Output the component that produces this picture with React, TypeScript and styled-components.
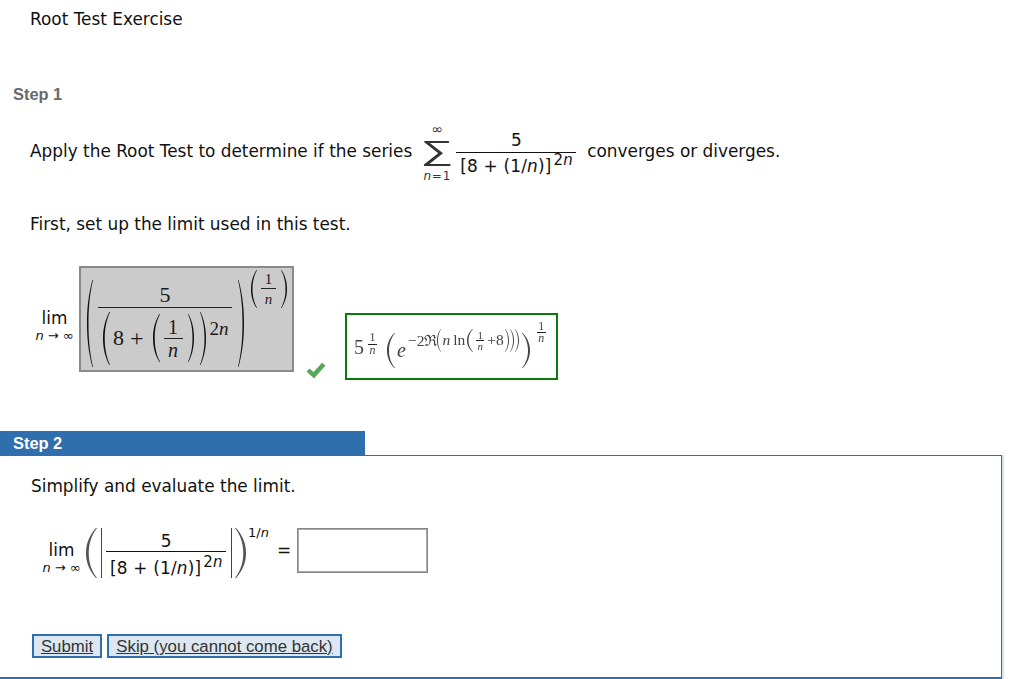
import React from "react";
import styled, { createGlobalStyle } from "styled-components";

const Global = createGlobalStyle`
  html, body { margin: 0; padding: 0; background: #fff; }
  body { font-family: "DejaVu Sans", Verdana, sans-serif; font-size: 16.9px; color: #111; overflow: hidden; }
`;

const Page = styled.div`
  width: 1024px;
  height: 679px;
  overflow: hidden;
`;

const Title = styled.div`
  height: 37px;
  padding: 0 0 0 30px;
  line-height: 38px;
`;

const StepOneLabel = styled.div`
  margin-top: 39px;
  height: 36px;
  padding-left: 13px;
  font: bold 16.4px/36px "Liberation Sans", Arial, sans-serif;
  color: #6a6a6a;
`;

const ApplyRow = styled.div`
  display: flex;
  align-items: center;
  height: 60px;
  margin-top: 9px;
  padding-left: 30px;
`;

const SumBlock = styled.div`
  display: flex;
  flex-direction: column;
  align-items: center;
  align-self: flex-start;
  width: 30px;
  margin-left: 10px;
  padding-top: 2px;
`;

const SumLimit = styled.div`
  font-size: 14px;
  line-height: 12px;
  height: 12px;
  white-space: nowrap;
  color: #333;
`;

const SumLimitLower = styled.div`
  margin-top: 4px;
  font-size: 12px;
  line-height: 12px;
  height: 12px;
  letter-spacing: 0.8px;
  white-space: nowrap;
  color: #333;
  i { font-style: italic; }
`;

const SumGlyph = styled.div`
  font: 400 28px/30px "Liberation Sans", Arial, sans-serif;
  height: 30px;
  margin-top: 1px;
  color: #333;
  transform: scaleX(1.65);
`;

const TextFrac = styled.div`
  display: inline-flex;
  flex-direction: column;
  align-items: center;
  flex: none;
  width: 120px;
  margin: ${(p: { $m?: string }) => p.$m || "0"};
`;

const TextNum = styled.div`
  line-height: 24px;
  height: 24px;
  border-bottom: 1px solid #111;
  align-self: stretch;
  text-align: center;
`;

const TextDen = styled.div`
  align-self: stretch;
  line-height: 26px;
  height: 26px;
  padding-left: 4px;
  letter-spacing: 0.2px;
  white-space: nowrap;
  sup { font-size: 15px; line-height: 0; position: relative; top: 0; margin-left: 2px; vertical-align: super; i { font-style: italic; } }
`;

const AfterText = styled.span`
  margin-left: 11px;
`;

const Para = styled.div`
  height: 24px;
  line-height: 24px;
  padding-left: ${(p: { $x?: number }) => p.$x ?? 30}px;
`;

const ParaFirst = styled(Para)`
  margin-top: 31px;
`;

const LimitRow = styled.div`
  display: flex;
  align-items: flex-start;
  height: 165px;
  margin-top: 30px;
`;

const LimLabel = styled.div`
  display: flex;
  flex-direction: column;
  align-items: center;
  flex: none;
  width: 45px;
  margin-left: ${(p: { $x: number }) => p.$x}px;
  margin-top: ${(p: { $y?: number }) => p.$y ?? 0}px;
  span { font-size: 16.9px; line-height: 17px; }
  small { font-size: 13px; line-height: 17px; white-space: nowrap; i { font-style: italic; } }
`;

const GrayBox = styled.div`
  box-sizing: border-box;
  flex: none;
  width: 215px;
  height: 106px;
  margin-left: 2px;
  background: #cbcbcb;
  border: 2px solid #8a8a8a;
  display: flex;
  align-items: flex-start;
  padding: 2px 0 0 6px;
  font-family: "Liberation Serif", "Times New Roman", serif;
  font-size: 21px;
  color: #1a1a1a;
`;

const ParenSvg = styled.svg`
  display: block;
  flex: none;
  margin: ${(p: { $m?: string }) => p.$m || "0"};
`;

const Paren = ({ w, h, right, m, color = "#111" }: { w: number; h: number; right?: boolean; m?: string; color?: string }) => (
  <ParenSvg $m={m} width={w} height={h} viewBox="0 0 10 100" preserveAspectRatio="none">
    <path
      d={right ? "M0 0 C6 18 7.5 34 7.5 50 C7.5 66 6 82 0 100 L1 100 C8 82 10 66 10 50 C10 34 8 18 1 0 Z" : "M10 0 C4 18 2.5 34 2.5 50 C2.5 66 4 82 10 100 L9 100 C2 82 0 66 0 50 C0 34 2 18 9 0 Z"}
      fill={color}
    />
  </ParenSvg>
);

const MathFrac = styled.div`
  display: flex;
  flex-direction: column;
  align-items: center;
  flex: none;
  width: ${(p: { $w: number; $mt?: number; $ml?: number }) => p.$w}px;
  margin-top: ${(p) => p.$mt ?? 0}px;
  margin-left: ${(p) => p.$ml ?? 0}px;
`;

const MathNum = styled.div`
  align-self: stretch;
  text-align: center;
  height: ${(p: { $h: number; $size: number }) => p.$h}px;
  line-height: ${(p) => p.$h}px;
  font-size: ${(p) => p.$size}px;
  border-bottom: 1px solid #222;
`;

const MathDen = styled.div`
  height: ${(p: { $h: number; $size: number }) => p.$h}px;
  line-height: ${(p) => p.$h}px;
  font-size: ${(p) => p.$size}px;
  font-style: italic;
`;

const DenRow = styled.div`
  display: flex;
  align-items: center;
  align-self: flex-start;
  margin: 3px 0 0 5px;
  height: 54px;
`;

const DenText = styled.span`
  margin: ${(p: { $m: string; $size?: number }) => p.$m};
  font-size: ${(p) => p.$size ?? 22}px;
`;

const SupText = styled.span`
  align-self: flex-start;
  margin: 9px 0 0 4px;
  font-size: 19px;
  line-height: 18px;
  white-space: nowrap;
  i { font-style: italic; }
`;

const CheckSvg = styled.svg`
  flex: none;
  margin: 96px 0 0 12px;
`;

const AnswerBox = styled.div`
  box-sizing: border-box;
  flex: none;
  width: 213px;
  height: 67px;
  margin: 47px 0 0 19px;
  border: 2px solid #0b7a0b;
  background: #fff;
  display: flex;
  align-items: flex-start;
  padding: 10px 0 0 7px;
  font-family: "Liberation Serif", "Times New Roman", serif;
  color: #444;
`;

const AnsInner = styled.div`
  display: flex;
  align-items: flex-start;
  filter: blur(0.45px);
`;

const AnsBig = styled.span`
  font-size: 20px;
  line-height: 30px;
  margin-top: 7px;
`;

const AnsE = styled.span`
  font-size: 20px;
  font-style: italic;
  line-height: 26px;
  margin: 12px 0 0 2px;
`;

const AnsExp = styled.div`
  display: flex;
  align-items: center;
  height: 24px;
  font-size: 15.5px;
  margin: 3px 0 0 2px;
  white-space: nowrap;
  i { font-style: italic; margin-right: 3px; }
  span { white-space: pre; }
`;

const PlusEight = styled.span`
  margin-left: 3px;
`;

const StepTwoTab = styled.div`
  box-sizing: border-box;
  width: 365px;
  height: 25px;
  background: #2f6fad;
  color: #fff;
  font: bold 16.4px/24px "Liberation Sans", Arial, sans-serif;
  padding-left: 13px;
`;

const Panel = styled.div`
  box-sizing: border-box;
  width: 1002px;
  height: 224px;
  margin-top: -1px;
  border: 1px solid #2f6fad;
  border-left: none;
  border-bottom-width: 2px;
  padding-top: 18px;
  box-shadow: 2px 0 0 #d5e2f0;
`;

const EvalRow = styled.div`
  display: flex;
  align-items: flex-start;
  height: 52px;
  margin-top: 30px;
`;

const AbsBar = styled.div`
  flex: none;
  width: 1px;
  height: 50px;
  margin: ${(p: { $m: string }) => p.$m};
  background: #444;
`;

const EvalNum = styled(TextNum)`
  line-height: 28px;
`;

const EvalDen = styled(TextDen)`
  padding-top: 3px;
`;

const ExpSup = styled.span`
  font-size: 13px;
  line-height: 16px;
  margin: -3px 0 0 2px;
  width: 29px;
  white-space: nowrap;
  i { font-style: italic; }
`;

const Eq = styled.span`
  margin: 10px 0 0 0;
  line-height: 24px;
`;

const AnswerInput = styled.input`
  box-sizing: border-box;
  flex: none;
  width: 131px;
  height: 45px;
  margin: 0 0 0 6px;
  border: 1px solid #888;
  box-shadow: inset 0 0 0 1px #aaa;
  background: #fff;
  padding: 0;
`;

const Actions = styled.div`
  display: flex;
  gap: 5px;
  padding-left: 32px;
  margin-top: 54px;
`;

const Btn = styled.button`
  box-sizing: border-box;
  flex: none;
  height: 24px;
  width: ${(p: { $w: number }) => p.$w}px;
  padding: 1px 0 0;
  background: #dce7f2;
  border: 2px solid #2f6fad;
  border-radius: 0;
  font: 16.8px/20px "Liberation Sans", Arial, sans-serif;
  color: #333;
  text-decoration: underline;
  white-space: nowrap;
`;

const App = () => (
  <Page>
    <Global />
    <Title>Root Test Exercise</Title>
    <StepOneLabel>Step 1</StepOneLabel>
    <ApplyRow>
      <span>Apply the Root Test to determine if the series</span>
      <SumBlock>
        <SumLimit>∞</SumLimit>
        <SumGlyph>∑</SumGlyph>
        <SumLimitLower><i>n</i>=1</SumLimitLower>
      </SumBlock>
      <TextFrac $m="4px 0 0 4px">
        <TextNum>5</TextNum>
        <TextDen>[8 + (1/<i>n</i>)]<sup>2<i>n</i></sup></TextDen>
      </TextFrac>
      <AfterText>converges or diverges.</AfterText>
    </ApplyRow>
    <ParaFirst>First, set up the limit used in this test.</ParaFirst>
    <LimitRow>
      <LimLabel $x={32} $y={44}>
        <span>lim</span>
        <small><i>n</i> → ∞</small>
      </LimLabel>
      <GrayBox>
        <Paren w={6} h={87} m="10px 0 0 0" />
        <MathFrac $w={134} $mt={12} $ml={5}>
          <MathNum $h={25} $size={22}>5</MathNum>
          <DenRow>
            <Paren w={7} h={53} />
            <DenText $m="0 0 0 3px">8</DenText>
            <DenText $m="0 0 0 6px" $size={24}>+</DenText>
            <Paren w={7} h={48} m="0 0 0 9px" />
            <MathFrac $w={19} $ml={4}>
              <MathNum $h={22} $size={20}>1</MathNum>
              <MathDen $h={22} $size={20}>n</MathDen>
            </MathFrac>
            <Paren w={6} h={48} right m="0 0 0 5px" />
            <Paren w={6} h={53} right m="0 0 0 6px" />
            <SupText>2<i>n</i></SupText>
          </DenRow>
        </MathFrac>
        <Paren w={6} h={87} right m="10px 0 0 6px" />
        <Paren w={6} h={38} m="0 0 0 7px" />
        <MathFrac $w={15} $mt={0} $ml={4}>
          <MathNum $h={18} $size={15}>1</MathNum>
          <MathDen $h={20} $size={15}>n</MathDen>
        </MathFrac>
        <Paren w={6} h={38} right m="0 0 0 5px" />
      </GrayBox>
      <CheckSvg width="20" height="17" viewBox="0 0 20 17">
        <path d="M0.5 9.5 L3.5 6.5 L7.5 10 L16 0.8 L19.5 3.5 L8 16.5 Z" fill="#5aa65a" />
      </CheckSvg>
      <AnswerBox>
        <AnsInner>
          <AnsBig>5</AnsBig>
          <MathFrac $w={9} $ml={4} $mt={6}>
            <MathNum $h={13} $size={12}>1</MathNum>
            <MathDen $h={11} $size={12}>n</MathDen>
          </MathFrac>
          <Paren w={8} h={35} m="8px 0 0 10px" color="#444" />
          <AnsE>e</AnsE>
          <AnsExp>
            <span>−2ℜ</span>
            <Paren w={4} h={23} m="0 1px 0 0" color="#444" />
            <i>n</i><span>ln</span>
            <Paren w={6} h={23} m="0 3px 0 2px" color="#444" />
            <MathFrac $w={8}>
              <MathNum $h={10} $size={11}>1</MathNum>
              <MathDen $h={10} $size={11}>n</MathDen>
            </MathFrac>
            <PlusEight>+8</PlusEight>
            <Paren w={4} h={23} right m="0 0 0 1px" color="#444" />
            <Paren w={4} h={23} right m="0 0 0 1px" color="#444" />
            <Paren w={4} h={23} right m="0 0 0 1px" color="#444" />
          </AnsExp>
          <Paren w={8} h={35} right m="8px 0 0 3px" color="#444" />
          <MathFrac $w={9} $ml={7} $mt={-4}>
            <MathNum $h={11} $size={12}>1</MathNum>
            <MathDen $h={11} $size={12}>n</MathDen>
          </MathFrac>
        </AnsInner>
      </AnswerBox>
    </LimitRow>
    <StepTwoTab>Step 2</StepTwoTab>
    <Panel>
      <Para $x={31}>Simplify and evaluate the limit.</Para>
      <EvalRow>
        <LimLabel $x={39} $y={14}>
          <span>lim</span>
          <small><i>n</i> → ∞</small>
        </LimLabel>
        <Paren w={11} h={50} m="0 0 0 2px" color="#555" />
        <AbsBar $m="0 0 0 4px" />
        <TextFrac $m="-1px 0 0 4px">
          <EvalNum>5</EvalNum>
          <EvalDen>[8 + (1/<i>n</i>)]<sup>2<i>n</i></sup></EvalDen>
        </TextFrac>
        <AbsBar $m="0 0 0 5px" />
        <Paren w={11} h={50} right m="0 0 0 3px" color="#555" />
        <ExpSup>1/<i>n</i></ExpSup>
        <Eq>=</Eq>
        <AnswerInput />
      </EvalRow>
      <Actions>
        <Btn $w={70}>Submit</Btn>
        <Btn $w={235}>Skip (you cannot come back)</Btn>
      </Actions>
    </Panel>
  </Page>
);

export default App;
